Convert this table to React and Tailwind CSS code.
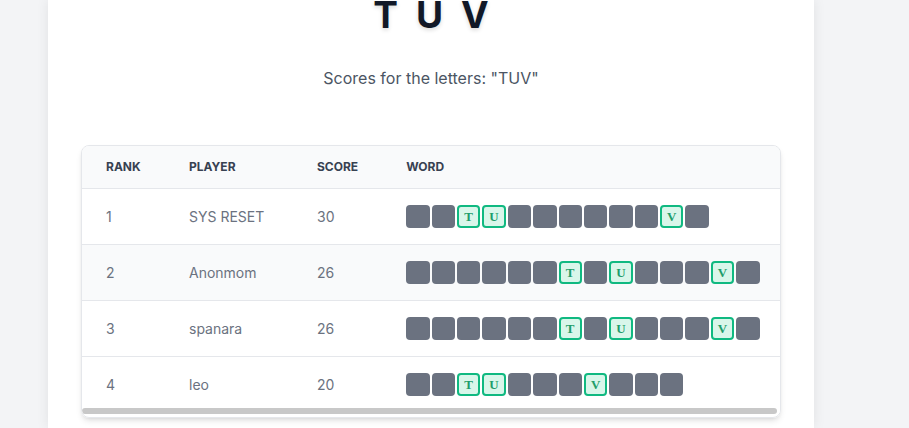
const rows = [
  { rank: 1, player: "SYS RESET", score: 30, word: "..TU......V." },
  { rank: 2, player: "Anonmom", score: 26, word: "......T.U...V." },
  { rank: 3, player: "spanara", score: 26, word: "......T.U...V." },
  { rank: 4, player: "leo", score: 20, word: "..TU...V..." },
];

const Tile = ({ ch }) =>
  ch === "." ? (
    <div className="w-[23.4px] h-[23.4px] shrink-0 rounded-[4px] bg-[#6b7280]" />
  ) : (
    <div className="w-[23.4px] h-[23.4px] shrink-0 rounded-[4px] border-2 border-[#10b981] bg-[#d9f6ea] flex items-center justify-center text-[13px] font-bold text-[#1f9d6b] [font-family:'Liberation_Serif','DejaVu_Serif',serif]">
      {ch}
    </div>
  );

const App = () => {
  return (
    <div className="min-h-screen bg-[#f3f4f6] font-['Inter',sans-serif]">
      <div className="ml-12 w-[766px] min-h-[428px] bg-white shadow-[0_0_12px_rgba(0,0,0,0.08)] px-[33px] flex flex-col items-center">
        <div className="-mt-[5px] flex gap-[18px] text-[37px] leading-[40px] font-bold text-[#111827] [text-shadow:0_2px_4px_rgba(0,0,0,0.15)]">
          <span>T</span>
          <span>U</span>
          <span>V</span>
        </div>
        <p className="mt-[31px] text-base text-[#4b5563]">Scores for the letters: "TUV"</p>

        <div className="relative mt-[55px] w-full overflow-hidden rounded-lg border border-[#e5e7eb] shadow-md pb-[4px]">
          <table className="w-[705px] min-w-[705px]">
            <thead className="bg-[#f9fafb]">
              <tr>
                <th className="w-[83px] px-6 py-[13px] text-left text-xs font-bold text-[#374151] uppercase leading-4">Rank</th>
                <th className="w-[128px] px-6 py-[13px] text-left text-xs font-bold text-[#374151] uppercase leading-4">Player</th>
                <th className="w-[89px] px-6 py-[13px] text-left text-xs font-bold text-[#374151] uppercase leading-4">Score</th>
                <th className="px-6 py-[13px] text-left text-xs font-bold text-[#374151] uppercase leading-4">Word</th>
              </tr>
            </thead>
            <tbody>
              {rows.map((r) => (
                <tr key={r.rank} className={`border-t border-[#e5e7eb] ${r.rank === 2 ? "bg-[#f9fafb]" : "bg-white"}`}>
                  <td className="h-[56px] px-6 text-sm text-[#6b7280] whitespace-nowrap">{r.rank}</td>
                  <td className="px-6 text-sm text-[#6b7280] whitespace-nowrap">{r.player}</td>
                  <td className="px-6 text-sm text-[#6b7280] whitespace-nowrap">{r.score}</td>
                  <td className="px-6 whitespace-nowrap">
                    <div className="flex gap-[2px]">
                      {r.word.split("").map((ch, i) => (
                        <Tile key={i} ch={ch} />
                      ))}
                    </div>
                  </td>
                </tr>
              ))}
            </tbody>
          </table>
          {/* thin horizontal scrollbar thumb */}
          <div className="absolute left-0 bottom-[3px] w-[695px] h-[6px] rounded-full bg-[#c8c8c8]" />
        </div>
      </div>
    </div>
  );
};

export default App;
